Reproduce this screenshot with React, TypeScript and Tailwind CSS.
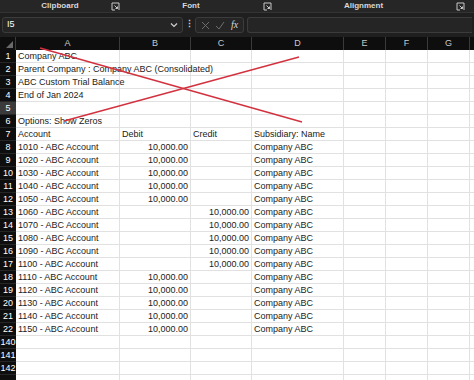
import React from 'react';

const colWidths = [104, 71, 61, 92, 42, 42, 42, 60];
const colNames = ['A', 'B', 'C', 'D', 'E', 'F', 'G', ''];

type Row = { n: string; a?: string; b?: string; c?: string; d?: string; sel?: boolean };

const rows: Row[] = [
  { n: '1', a: 'Company ABC' },
  { n: '2', a: 'Parent Company : Company ABC (Consolidated)' },
  { n: '3', a: 'ABC Custom Trial Balance' },
  { n: '4', a: 'End of Jan 2024' },
  { n: '5', sel: true },
  { n: '6', a: 'Options: Show Zeros' },
  { n: '7', a: 'Account', b: 'Debit', c: 'Credit', d: 'Subsidiary: Name' },
  ...[1010, 1020, 1030, 1040, 1050].map(c => ({ n: String(c / 10 - 93), a: `${c} - ABC Account`, b: '10,000.00', d: 'Company ABC' })),
  ...[1060, 1070, 1080, 1090, 1100].map(c => ({ n: String(c / 10 - 93), a: `${c} - ABC Account`, c: '10,000.00', d: 'Company ABC' })),
  ...[1110, 1120, 1130, 1140, 1150].map(c => ({ n: String(c / 10 - 93), a: `${c} - ABC Account`, b: '10,000.00', d: 'Company ABC' })),
  { n: '140' },
  { n: '141' },
  { n: '142' },
  { n: '' },
];

const Launcher = () => (
  <svg width="9" height="9" viewBox="0 0 9 9" className="text-[#c8c8c8]">
    <path d="M1 1h7v7" fill="none" stroke="currentColor" strokeWidth="1" />
    <path d="M1 1v7h3" fill="none" stroke="currentColor" strokeWidth="1" />
    <path d="M3.5 3.5l3 3M6.5 4.5v2h-2" fill="none" stroke="currentColor" strokeWidth="1" />
  </svg>
);

export default function App() {
  return (
    <div className="w-[474px] h-[380px] overflow-hidden bg-[#1f1f1f] font-['Liberation_Sans',Arial,sans-serif] text-[9px]">
      {/* Ribbon group labels */}
      <div className="h-[12px] flex items-center bg-[#262626] text-[#d8d8d8] text-[8px] font-semibold leading-none">
        <div className="w-[110px] flex justify-center pl-[10px]">Clipboard</div>
        <div className="w-[10px] flex justify-center"><Launcher /></div>
        <div className="w-[142px] flex justify-center">Font</div>
        <div className="w-[10px] flex justify-center"><Launcher /></div>
        <div className="w-[183px] flex justify-center">Alignment</div>
        <div className="w-[10px] flex justify-center"><Launcher /></div>
      </div>

      {/* Formula bar */}
      <div className="h-[25px] flex items-center px-[2px] border-t border-[#333]">
        <div className="w-[181px] h-[16px] rounded-[3px] border border-[#3c3c3c] bg-[#252525] flex items-center justify-between px-[4px] text-white">
          <span>I5</span>
          <svg width="8" height="6" viewBox="0 0 8 6"><path d="M1 1.5l3 3 3-3" fill="none" stroke="#d0d0d0" strokeWidth="1.2" /></svg>
        </div>
        <div className="w-[12px] flex justify-center text-[#cfcfcf] font-bold">⋮</div>
        <div className="w-[49px] h-[16px] rounded-[3px] border border-[#3c3c3c] bg-[#252525] flex items-center justify-around px-[2px]">
          <svg width="9" height="9" viewBox="0 0 9 9"><path d="M1 1l7 7M8 1l-7 7" stroke="#6e6e6e" strokeWidth="1" /></svg>
          <svg width="10" height="9" viewBox="0 0 10 9"><path d="M1 5l3 3 5-7" fill="none" stroke="#6e6e6e" strokeWidth="1" /></svg>
          <span className="text-[#d8d8d8] italic font-['Liberation_Serif',serif] text-[10px] leading-none">fx</span>
        </div>
        <div className="flex-1 h-[16px] ml-[3px] rounded-l-[3px] border border-r-0 border-[#3c3c3c] bg-[#252525]" />
      </div>

      {/* Sheet */}
      <div className="relative">
        <div className="flex h-[13px] bg-[#0e0e0e] text-[#c9c9c9] leading-[13px]">
          <div className="w-[16px] shrink-0 border-r border-[#3a3a3a] flex items-end justify-end p-[2px]">
            <div className="w-0 h-0 border-l-[7px] border-l-transparent border-b-[7px] border-b-[#6a6a6a]" />
          </div>
          {colNames.map((c, i) => (
            <div key={i} style={{ width: colWidths[i] }} className="shrink-0 text-center border-r border-[#3a3a3a]">{c}</div>
          ))}
        </div>
        {rows.map((r, idx) => (
          <div key={idx} className="flex h-[13px] leading-[12px] text-[#222]">
            <div className={`w-[16px] shrink-0 text-center text-white border-b border-[#262626] ${r.sel ? 'bg-[#3b3b3b]' : 'bg-[#0e0e0e]'}`}>{r.n}</div>
            <div className="flex bg-white">
              <div style={{ width: colWidths[0] }} className="shrink-0 border-r border-b border-[#e1e1e1] pl-[2px] whitespace-nowrap overflow-visible relative z-10">{r.a}</div>
              <div style={{ width: colWidths[1] }} className="shrink-0 border-r border-b border-[#e1e1e1] pl-[2px] pr-[2px] text-right whitespace-nowrap">
                <span className={r.b === 'Debit' ? 'block text-left' : ''}>{r.b}</span>
              </div>
              <div style={{ width: colWidths[2] }} className="shrink-0 border-r border-b border-[#e1e1e1] pl-[2px] pr-[2px] text-right whitespace-nowrap">
                <span className={r.c === 'Credit' ? 'block text-left' : ''}>{r.c}</span>
              </div>
              <div style={{ width: colWidths[3] }} className="shrink-0 border-r border-b border-[#e1e1e1] pl-[2px] whitespace-nowrap">{r.d}</div>
              {colWidths.slice(4).map((w, i) => (
                <div key={i} style={{ width: w }} className="shrink-0 border-r border-b border-[#e1e1e1]" />
              ))}
            </div>
          </div>
        ))}
        <svg className="absolute left-0 top-0 pointer-events-none z-20" width="474" height="345">
          <line x1="40" y1="11" x2="302" y2="85" stroke="#d2323f" strokeWidth="1.5" />
          <line x1="64" y1="84" x2="299" y2="20" stroke="#d2323f" strokeWidth="1.5" />
        </svg>
      </div>
    </div>
  );
}
